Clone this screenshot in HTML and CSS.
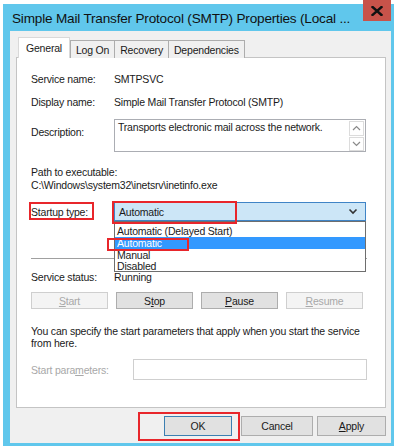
FILE: index.html
```html
<!DOCTYPE html>
<html>
<head>
<meta charset="utf-8">
<link rel="stylesheet" href="styles.css">
</head>
<body>
<div class="page">
  <div class="window">
    <div class="titlebar">
      <span class="title">Simple Mail Transfer Protocol (SMTP) Properties (Local ...</span>
    </div>
    <div class="close">
      <svg width="12" height="10" viewBox="0 0 12 10"><path d="M1.5 1 L10.5 9 M10.5 1 L1.5 9" stroke="#111" stroke-width="2.4" stroke-linecap="square"/></svg>
    </div>
    <div class="client">
      <div class="tabs">
        <div class="tab sel">General</div>
        <div class="tab">Log On</div>
        <div class="tab">Recovery</div>
        <div class="tab">Dependencies</div>
      </div>
      <div class="panel">
        <div class="row r1"><span class="lbl">Service name:</span><span>SMTPSVC</span></div>
        <div class="row r2"><span class="lbl">Display name:</span><span>Simple Mail Transfer Protocol (SMTP)</span></div>
        <div class="row desc">
          <span class="lbl dlbl">Description:</span>
          <div class="descbox">
            <span class="desctext">Transports electronic mail across the network.</span>
            <div class="scroll">
              <div class="sbtn"><svg width="9" height="6" viewBox="0 0 9 6"><path d="M1 5 L4.5 1.5 L8 5" fill="none" stroke="#8a8a8a" stroke-width="1.2"/></svg></div>
              <div class="sbtn"><svg width="9" height="6" viewBox="0 0 9 6"><path d="M1 1 L4.5 4.5 L8 1" fill="none" stroke="#8a8a8a" stroke-width="1.2"/></svg></div>
            </div>
          </div>
        </div>
        <div class="pathlbl">Path to executable:</div>
        <div class="path">C:\Windows\system32\inetsrv\inetinfo.exe</div>
        <div class="row startup">
          <span class="lbl">Startup type:</span>
          <div class="combo">
            <span>Automatic</span>
            <svg width="10" height="7" viewBox="0 0 10 7"><path d="M1.5 1.5 L5 5 L8.5 1.5" fill="none" stroke="#333" stroke-width="1.6"/></svg>
            <div class="list">
              <div class="item">Automatic (Delayed Start)</div>
              <div class="item hl">Automatic</div>
              <div class="item">Manual</div>
              <div class="item last">Disabled</div>
            </div>
          </div>
        </div>
        <div class="sep"></div>
        <div class="row status"><span class="lbl">Service status:</span><span>Running</span></div>
        <div class="btnrow">
          <div class="btn dis"><u>S</u>tart</div>
          <div class="btn">S<u>t</u>op</div>
          <div class="btn"><u>P</u>ause</div>
          <div class="btn dis"><u>R</u>esume</div>
        </div>
        <p class="info">You can specify the start parameters that apply when you start the service from here.</p>
        <div class="row params">
          <span class="plbl">Start para<u>m</u>eters:</span>
          <div class="field"></div>
        </div>
      </div>
      <div class="footer">
        <div class="fbtn ok">OK</div>
        <div class="fbtn cancel">Cancel</div>
        <div class="fbtn apply"><u>A</u>pply</div>
      </div>
    </div>
  </div>
  <div class="mark m1"></div>
  <div class="mark m2"></div>
  <div class="mark m3"></div>
  <div class="mark m4"></div>
</div>
</body>
</html>
```
FILE: styles.css
```css
* { box-sizing: border-box; }
html, body { margin: 0; padding: 0; background: #fff; }
body {
  font-family: "Liberation Sans", Arial, sans-serif;
  font-size: 10.5px;
  letter-spacing: -0.2px;
  color: #1a1a1a;
}
.page {
  position: relative;
  width: 394px;
  height: 448px;
  overflow: hidden;
}
.window {
  position: relative;
  margin: 4px 0 0 3px;
  width: 391px;
  height: 442px;
  background: #60c7ec;
  padding: 0 3px 3px 7px;
  display: flex;
  flex-direction: column;
}
.titlebar {
  height: 27px;
  display: flex;
  align-items: center;
  padding-left: 2px;
  padding-top: 1px;
}
.title {
  font-size: 13.6px;
  letter-spacing: -0.2px;
  color: #111;
  white-space: nowrap;
}
.close {
  position: absolute;
  top: -4px;
  left: 360px;
  width: 28px;
  height: 21px;
  background: #c8534a;
  display: flex;
  align-items: center;
  justify-content: center;
}
.client {
  flex: 1;
  background: #f0f0f0;
  padding: 8px 5px 0 6px;
  display: flex;
  flex-direction: column;
}
.tabs {
  display: flex;
  align-items: flex-end;
  height: 19px;
  padding-left: 2px;
  position: relative;
  z-index: 1;
  margin-bottom: -1px;
}
.tab {
  height: 18px;
  border: 1px solid #adadad;
  border-bottom: none;
  background: #f0f0f0;
  display: flex;
  align-items: center;
  padding: 0 5px;
  margin-left: -1px;
}
.tab.sel {
  height: 21px;
  background: #fff;
  border-color: #d9d9d9;
  padding: 0 7px;
  margin-left: 0;
  margin-right: 1px;
}
.panel {
  background: #fff;
  border: 1px solid #c4c4c4;
  height: 351px;
  padding: 14px 18px 0 14px;
  display: flex;
  flex-direction: column;
}
.row {
  display: flex;
  align-items: center;
}
.lbl {
  width: 83px;
  flex: none;
}
.r1 { height: 14px; }
.r2 { height: 14px; margin-top: 9px; }
.desc { margin-top: 10px; align-items: flex-start; }
.dlbl { margin-top: 7px; }
.descbox {
  width: 252px;
  height: 33px;
  border: 1px solid #abadb3;
  display: flex;
  justify-content: space-between;
  padding: 1px 0 0 3px;
}
.desctext { line-height: 13px; }
.scroll {
  display: flex;
  flex-direction: column;
  gap: 1px;
  padding-right: 1px;
}
.sbtn {
  width: 15px;
  height: 15px;
  border: 1px solid #dcdcdc;
  display: flex;
  align-items: center;
  justify-content: center;
}
.pathlbl { margin-top: 13px; height: 14px; line-height: 14px; }
.path { height: 13px; line-height: 13px; }
.startup { margin-top: 10px; }
.combo {
  position: relative;
  width: 252px;
  height: 19px;
  border: 1px solid #3f84c6;
  background: #cce6f7;
  display: flex;
  align-items: center;
  justify-content: space-between;
  padding: 0 7px 0 4px;
}
.list {
  position: absolute;
  top: 18px;
  left: -1px;
  width: 252px;
  height: 51px;
  background: #fff;
  border: 1px solid #6e6e6e;
  padding-top: 3px;
  z-index: 2;
}
.item {
  height: 12px;
  line-height: 12px;
  padding-left: 2px;
  white-space: nowrap;
}
.item.last {
  height: 10px;
  line-height: 11px;
}
.item.hl {
  background: #3399ff;
  color: #fff;
}
.sep {
  margin-top: 37px;
  height: 1px;
  background: #a0a0a0;
  width: 336px;
}
.status { height: 13px; line-height: 12px; margin-top: 11px; }
.btnrow {
  display: flex;
  gap: 8px;
  margin-top: 9px;
}
.btn {
  width: 77px;
  height: 17px;
  border: 1px solid #adadad;
  background: #e1e1e1;
  display: flex;
  align-items: center;
  justify-content: center;
}
.btn.dis {
  background: #f4f4f4;
  border-color: #cfcfcf;
  color: #a8a8a8;
}
.info {
  margin: 16px 0 0 0;
  line-height: 12px;
  width: 335px;
}
.params { margin-top: 10px; }
.plbl { width: 102px; flex: none; color: #a8a8a8; }
.field {
  width: 235px;
  height: 21px;
  border: 1px solid #cfcfcf;
  background: #fff;
}
.footer {
  display: flex;
  justify-content: flex-end;
  margin-top: 8px;
}
.fbtn {
  height: 20px;
  border: 1px solid #adadad;
  background: #e1e1e1;
  display: flex;
  align-items: center;
  justify-content: center;
}
.ok { width: 68px; border-color: #3c7fb1; margin-right: 9px; }
.cancel { width: 72px; margin-right: 4px; }
.apply { width: 69px; }
.mark {
  position: absolute;
  border: 2px solid #e8262b;
  z-index: 5;
}
.m1 { left: 29px; top: 202px; width: 65px; height: 18px; }
.m2 { left: 112px; top: 201px; width: 125px; height: 23px; }
.m3 { left: 107px; top: 238px; width: 82px; height: 13px; }
.m4 { left: 138px; top: 412px; width: 102px; height: 29px; }
```
